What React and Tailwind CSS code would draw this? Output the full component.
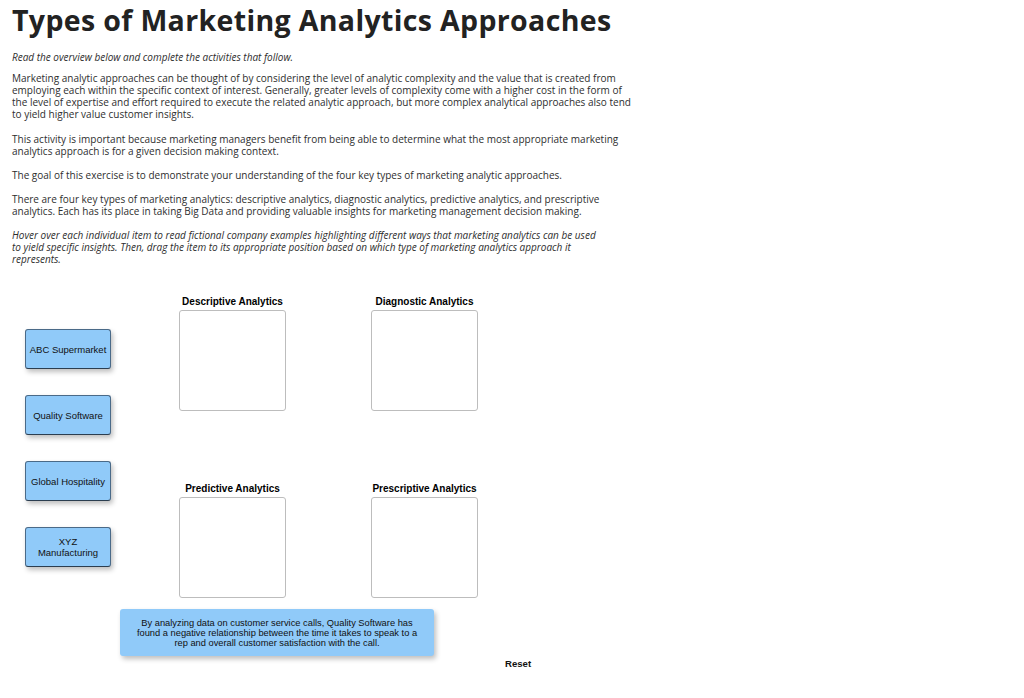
import React from 'react';

const items = ['ABC Supermarket', 'Quality Software', 'Global Hospitality', 'XYZ Manufacturing'];

function Zone({ label }) {
    return (
        <div className="flex flex-col items-center w-[107px]">
            <div className="h-[16px] flex items-end whitespace-nowrap text-[10px] leading-[12px] font-bold text-black">{label}</div>
            <div className="mt-[2px] w-[107px] h-[101px] bg-white border border-[#bdbdbd] rounded-[3px]"></div>
        </div>
    );
}

export default function App() {
    return (
        <div className="relative w-[1024px] h-[698px] bg-white overflow-hidden" style={{ fontFamily: '"Open Sans", "Liberation Sans", sans-serif' }}>
            <div className="pl-[12px] pt-[3px]">
                <h1 className="text-[28.5px] font-bold leading-[34px] text-[#222] tracking-[0.35px] whitespace-nowrap">Types of Marketing Analytics Approaches</h1>
                <div className="mt-[14px] text-[10px] leading-[12px] whitespace-nowrap text-[#2e2e2e]">
                    <p className="italic">Read the overview below and complete the activities that follow.</p>
                    <p className="mt-[9px]">
                        Marketing analytic approaches can be thought of by considering the level of analytic complexity and the value that is created from<br />
                        employing each within the specific context of interest. Generally, greater levels of complexity come with a higher cost in the form of<br />
                        the level of expertise and effort required to execute the related analytic approach, but more complex analytical approaches also tend<br />
                        to yield higher value customer insights.
                    </p>
                    <p className="mt-[13px]">
                        This activity is important because marketing managers benefit from being able to determine what the most appropriate marketing<br />
                        analytics approach is for a given decision making context.
                    </p>
                    <p className="mt-[12px]">The goal of this exercise is to demonstrate your understanding of the four key types of marketing analytic approaches.</p>
                    <p className="mt-[12px]">
                        There are four key types of marketing analytics: descriptive analytics, diagnostic analytics, predictive analytics, and prescriptive<br />
                        analytics. Each has its place in taking Big Data and providing valuable insights for marketing management decision making.
                    </p>
                    <p className="mt-[12px] italic">
                        Hover over each individual item to read fictional company examples highlighting different ways that marketing analytics can be used<br />
                        to yield specific insights. Then, drag the item to its appropriate position based on which type of marketing analytics approach it<br />
                        represents.
                    </p>
                </div>
            </div>

            <div className="mt-[27px] flex pl-[25px]" style={{ fontFamily: '"Liberation Sans", Arial, sans-serif' }}>
                <div className="pt-[37px] flex flex-col gap-[26px]">
                    {items.map(name => (
                        <div key={name} className="w-[86px] h-[40px] flex items-center justify-center text-center px-[3px] text-[9.5px] leading-[11px] text-[#111] bg-[#90caf9] border border-[#4a6a88] border-b-[#2c3e50] rounded-[3px] shadow-[2px_3px_5px_rgba(0,0,0,0.25)]">
                            {name === 'XYZ Manufacturing' ? <span>XYZ<br />Manufacturing</span> : name}
                        </div>
                    ))}
                </div>
                <div className="ml-[68px] grid grid-cols-[107px_107px] gap-x-[85px] gap-y-[68px]">
                    <Zone label="Descriptive Analytics" />
                    <Zone label="Diagnostic Analytics" />
                    <Zone label="Predictive Analytics" />
                    <Zone label="Prescriptive Analytics" />
                </div>
            </div>

            <div className="absolute left-[120px] top-[609px] w-[314px] h-[47px] flex items-center justify-center text-center bg-[#90caf9] rounded-[3px] shadow-[2px_3px_5px_rgba(0,0,0,0.25)] text-[9.3px] leading-[10px] text-[#111]" style={{ fontFamily: '"Liberation Sans", Arial, sans-serif' }}>
                <span>
                    By analyzing data on customer service calls, Quality Software has<br />
                    found a negative relationship between the time it takes to speak to a<br />
                    rep and overall customer satisfaction with the call.
                </span>
            </div>

            <div className="absolute left-[505px] top-[657px] text-[9.6px] font-bold text-[#111]" style={{ fontFamily: '"Liberation Sans", Arial, sans-serif' }}>Reset</div>
        </div>
    );
}
